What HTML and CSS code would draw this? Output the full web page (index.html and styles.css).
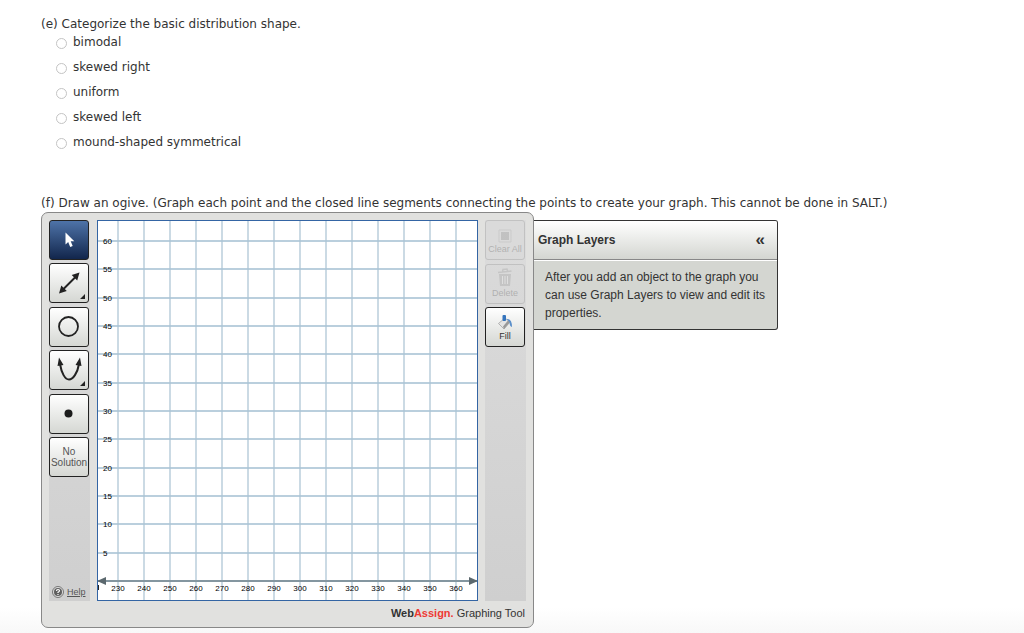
FILE: index.html
```html
<!DOCTYPE html>
<html lang="en">
<head>
    <meta charset="UTF-8">
    <meta name="viewport" content="width=device-width, initial-scale=1.0">
    <title>Graphing Tool</title>
    <link rel="stylesheet" href="styles.css">
</head>
<body>
    <form class="question">
        <fieldset class="choices">
            <legend>(e) Categorize the basic distribution shape.</legend>
            <label class="choice"><input type="radio" name="shape" value="bimodal"> bimodal</label>
            <label class="choice"><input type="radio" name="shape" value="right"> skewed right</label>
            <label class="choice"><input type="radio" name="shape" value="uniform"> uniform</label>
            <label class="choice"><input type="radio" name="shape" value="left"> skewed left</label>
            <label class="choice"><input type="radio" name="shape" value="mound"> mound-shaped symmetrical</label>
        </fieldset>

        <p class="prompt">(f) Draw an ogive. (Graph each point and the closed line segments connecting the points to create your graph. This cannot be done in SALT.)</p>

        <div class="graph-row">
            <section class="graph-tool">
                <div class="workspace">
                    <div class="toolbar">
                        <div class="tools">
                            <button type="button" class="tool active" aria-label="Select">
                                <svg width="38" height="38" viewBox="0 0 38 38"><path d="M15.500 11.500v12l2.700-2.500 2 5 2.500-1-2-4.800h3.600z" fill="#fff"/></svg>
                            </button>
                            <button type="button" class="tool" aria-label="Line">
                                <svg width="38" height="38" viewBox="0 0 38 38"><path d="M12 26.500 26.500 12" stroke="#222" stroke-width="2"/><path d="M29.500 8.500l-2.300 8-5.500-5.500zM9 29.500l2.300-8 5.500 5.500zM35 30v5h-5z" fill="#222"/></svg>
                            </button>
                            <button type="button" class="tool" aria-label="Circle">
                                <svg width="38" height="38" viewBox="0 0 38 38"><circle cx="18.500" cy="18.500" r="9.500" fill="none" stroke="#222" stroke-width="1.800"/></svg>
                            </button>
                            <button type="button" class="tool" aria-label="Parabola">
                                <svg width="38" height="38" viewBox="0 0 38 38"><path d="M10 13C11.500 22 15 28.500 19 28.500S27.500 22 29 13" fill="none" stroke="#222" stroke-width="2"/><path d="M9 6.500l4.500 7.500-6 1zM30 6.500l1.500 8.500-6-1zM35 30v5h-5z" fill="#222"/></svg>
                            </button>
                            <button type="button" class="tool" aria-label="Point">
                                <svg width="38" height="38" viewBox="0 0 38 38"><circle cx="18.500" cy="18.500" r="4" fill="#1c1c1c"/></svg>
                            </button>
                            <button type="button" class="tool no-solution">No<br>Solution</button>
                        </div>
                        <a href="#" class="help">
                            <svg width="12" height="12" viewBox="0 0 12 12"><circle cx="6" cy="6" r="5.500" fill="#ddd" stroke="#777"/><circle cx="6" cy="6" r="4" fill="#606060"/><path d="M4.500 5q0-1.500 1.500-1.500t1.500 1.300Q7.500 5.600 6 6.300v.7M6 8v1" fill="none" stroke="#fff" stroke-width="1.200"/></svg>
                            <span>Help</span>
                        </a>
                    </div>

                    <svg id="graph" class="graph" width="381" height="381" viewBox="0 0 381 381"></svg>

                    <div class="toolbar">
                        <div class="actions">
                            <button type="button" class="tool" disabled>
                                <svg width="14" height="14" viewBox="0 0 14 14"><path d="M1 1h12v12H1z" fill="none" stroke="#999"/><path d="M3 3h8v8H3z" fill="#777"/></svg>
                                <span>Clear All</span>
                            </button>
                            <button type="button" class="tool" disabled>
                                <svg width="16" height="19" viewBox="0 0 16 19"><path d="M1 4.500 14.500 3M5.500 3.500l.5-2 4-.5.500 2" fill="none" stroke="#888" stroke-width="1.500"/><path d="M2 6h12l-1 12H3z" fill="#888"/><path d="M5.500 8v8M8 8v8M10.500 8v8" stroke="#eee"/></svg>
                                <span>Delete</span>
                            </button>
                            <button type="button" class="tool">
                                <svg width="16" height="16" viewBox="0 0 16 16"><path d="M1.500 9.500 8 4l5 4-6 7z" fill="#e4e4e4" stroke="#999" stroke-width=".7"/><path d="M7 15l6-7-2-1.500-5 6z" fill="#999"/><path d="M9.500 5q5.500-.5 5.500 8-2.500-.5-2.500-5z" fill="#5b8fca"/><rect x="5.500" y="1" width="3.500" height="6" rx="1" fill="#3474bd"/></svg>
                                <span>Fill</span>
                            </button>
                        </div>
                    </div>
                </div>
                <footer class="brand"><b>Web<em>Assign.</em></b> Graphing Tool</footer>
            </section>

            <aside class="layers">
                <header class="layers-header">
                    <h2>Graph Layers</h2>
                    <button type="button" class="collapse" aria-label="Collapse">«</button>
                </header>
                <p>After you add an object to the graph you can use Graph Layers to view and edit its properties.</p>
            </aside>
        </div>
    </form>

    <script>
        const graph = document.getElementById('graph');
        const axisY = 361;
        let shapes = '';
        let labels = '';

        // Vertical lines, one every 10 units from 230 to 360
        for (let i = 0; i < 14; i++) {
            const x = 21 + i * 26;
            shapes += `<path class="grid" d="M${x} 0V381"/>`;
            labels += `<text x="${x}" y="371" text-anchor="middle">${230 + i * 10}</text>`;
        }

        // Horizontal lines, one every 5 units up to 60
        for (let i = 1; i <= 12; i++) {
            const y = Math.round(axisY - i * 28.35);
            shapes += `<path class="grid row" d="M0 ${y}H381"/>`;
            labels += `<text x="6" y="${y + 3}">${i * 5}</text>`;
        }

        shapes += `<path class="axis" d="M0 ${axisY}H381"/>`;
        shapes += `<path class="arrow" d="M0 ${axisY}l9-4v8zM381 ${axisY}l-9-4v8z"/>`;
        labels += '<path d="M1.500 365v5" stroke="#222"/>';
        graph.innerHTML = shapes + labels + '<rect class="frame" x=".5" y=".5" width="380" height="380"/>';
    </script>
</body>
</html>
```
FILE: styles.css
```css
:root {
    --text-color: #333;
    --tool-bg: #e1e1df;
    --rail-bg: #cfcfcf;
    --frame-blue: #3465a4;
    --ui-font: "Liberation Sans", Arial, sans-serif;
}

* {
    box-sizing: border-box;
}

body {
    margin: 0;
    padding: 16px 41px 5px;
    font-family: "DejaVu Sans", Verdana, sans-serif;
    font-size: 12px;
    color: var(--text-color);
    background: linear-gradient(#fff 96%, #f8f8f8);
}

.choices {
    margin: 0;
    padding: 0;
    border: 0;
}

.choices legend {
    padding: 0;
    line-height: 16px;
}

.choice {
    display: flex;
    align-items: center;
    gap: 6px;
    width: fit-content;
    height: 20px;
    margin: 0 0 5px 15px;
}

.choice input {
    appearance: none;
    width: 11px;
    height: 11px;
    margin: 2px 0 0;
    border: 1px solid #c4c4c4;
    border-radius: 50%;
    background: #fff;
}

.choice input:checked {
    background: #777;
}

.prompt {
    margin: 38px 0 0;
    line-height: 17px;
}

.graph-row {
    display: flex;
    align-items: flex-start;
}

.graph-tool {
    padding: 7px;
    border: 1px solid #888;
    border-radius: 7px;
    background: var(--tool-bg);
    font-family: var(--ui-font);
}

.workspace {
    display: flex;
    gap: 7px;
}

.toolbar {
    display: flex;
    flex-direction: column;
    justify-content: space-between;
    width: 41px;
    background: linear-gradient(#dcdcdc, var(--rail-bg));
}

.tools,
.actions {
    display: flex;
    flex-direction: column;
    justify-content: space-between;
    height: 257px;
}

.actions {
    height: 127px;
}

.tool {
    display: flex;
    flex-direction: column;
    align-items: center;
    justify-content: center;
    width: 40px;
    height: 40px;
    padding: 0;
    border: 1px solid #222;
    border-radius: 3px;
    background: linear-gradient(#fff, #d5d7d3);
    font: 9px/11px var(--ui-font);
    color: #333;
    white-space: nowrap;
    cursor: pointer;
}

.tool svg {
    flex: none;
}

.no-solution {
    font-size: 10px;
    color: #555;
}

.actions .tool {
    justify-content: flex-end;
    gap: 1px;
    padding-bottom: 4px;
}

.tool.active {
    background: linear-gradient(#4e73a8, #12264c);
}

.tool:disabled {
    border-color: #777;
    background: #d8d8d8;
    opacity: 0.25;
    cursor: default;
}

.help {
    display: flex;
    align-items: center;
    gap: 3px;
    padding: 0 0 3px 3px;
    font-size: 9px;
    line-height: 12px;
    color: #555;
}

.graph {
    display: block;
    background: #fff;
}

.graph text {
    font: 8px var(--ui-font);
    fill: #000;
}

.grid {
    stroke: #cbdae4;
    stroke-width: 2;
}

.grid.row {
    stroke: #a9c3d4;
    stroke-opacity: 0.8;
}

.axis {
    stroke: #8496a0;
    stroke-width: 2;
}

.arrow {
    fill: #5b686e;
}

.frame {
    fill: none;
    stroke: var(--frame-blue);
}

.brand {
    padding: 5px 1px 0;
    font-size: 11px;
    line-height: 14px;
    text-align: right;
}

.brand em {
    font-style: normal;
    color: #ee3a34;
}

.layers {
    width: 244px;
    margin-top: 8px;
    border: 1px solid #333;
    border-left: 0;
    border-radius: 0 3px 3px 0;
    background: #d4d6d1;
    font-family: var(--ui-font);
    font-size: 12px;
    overflow: hidden;
}

.layers-header {
    display: flex;
    align-items: center;
    justify-content: space-between;
    height: 39px;
    padding: 0 12px 0 4px;
    border-bottom: 1px solid #888;
    background: linear-gradient(#fff, #d4d6d1);
}

.layers h2 {
    margin: 0;
    font-size: 12px;
}

.collapse {
    padding: 0;
    border: 0;
    background: none;
    font: bold 17px var(--ui-font);
    color: #333;
    cursor: pointer;
}

.layers p {
    margin: 0;
    padding: 7px 7px 7px 11px;
    border-top: 1px solid #fff;
    line-height: 18px;
}

@media (max-width: 800px) {
    .graph-row {
        flex-wrap: wrap;
    }
}
```
